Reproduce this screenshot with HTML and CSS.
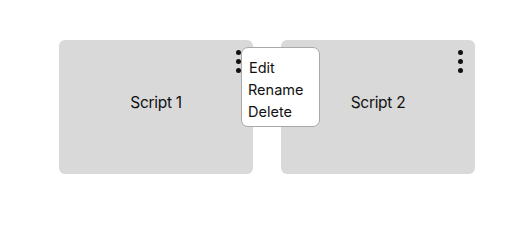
FILE: index.html
```html
<!DOCTYPE html>
<html>
<head>
<meta charset="utf-8">
<link rel="stylesheet" href="styles.css">
</head>
<body>
<div class="page">
  <div class="card">
    <span class="title">Script 1</span>
    <div class="more">
      <div class="dots"><i></i><i></i><i></i></div>
      <ul class="menu">
        <li class="first">Edit</li>
        <li>Rename</li>
        <li>Delete</li>
      </ul>
    </div>
  </div>
  <div class="card">
    <span class="title">Script 2</span>
    <div class="more">
      <div class="dots"><i></i><i></i><i></i></div>
    </div>
  </div>
</div>
</body>
</html>
```
FILE: styles.css
```css
html, body {
  margin: 0;
  padding: 0;
  background: #ffffff;
}
body {
  font-family: Inter, "Liberation Sans", sans-serif;
  color: #111111;
}
.page {
  display: flex;
  gap: 28px;
  padding: 40px 0 0 59px;
}
.card {
  position: relative;
  box-sizing: border-box;
  width: 194px;
  height: 134px;
  padding-bottom: 10px;
  background: #d9d9d9;
  border-radius: 6px;
  display: flex;
  align-items: center;
  justify-content: center;
}
.title {
  font-size: 15.5px;
  letter-spacing: -0.3px;
}
.more {
  position: absolute;
  top: 10px;
  right: 12px;
}
.dots {
  display: flex;
  flex-direction: column;
  gap: 4px;
  width: 6px;
  align-items: center;
}
.dots i {
  display: block;
  width: 5px;
  height: 5px;
  border-radius: 50%;
  background: #111111;
}
.menu {
  position: absolute;
  z-index: 2;
  top: -3px;
  left: 6px;
  box-sizing: border-box;
  width: 79px;
  height: 80px;
  margin: 0;
  padding: 9px 5px 4px 6px;
  list-style: none;
  background: #ffffff;
  border: 1px solid #a9a9a9;
  border-radius: 7px;
  font-size: 14.5px;
  line-height: 21.8px;
}
.menu .first {
  padding-left: 1px;
}
```
